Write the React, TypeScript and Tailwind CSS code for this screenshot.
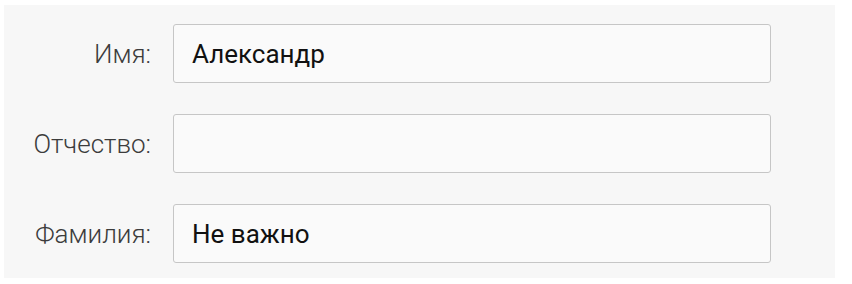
const fields = [
  { label: "Имя:", value: "Александр" },
  { label: "Отчество:", value: "" },
  { label: "Фамилия:", value: "Не важно" },
];

export default function App() {
  return (
    <div className="w-[852px] h-[284px] bg-white pt-[5px] pl-[4px]">
      <div
        className="w-[831px] h-[273px] bg-[#f7f7f7] pt-[19px] flex flex-col gap-[31px]"
        style={{ fontFamily: "Roboto, 'Noto Sans', sans-serif" }}
      >
        {fields.map((f) => (
          <div key={f.label} className="flex items-center gap-[22px]">
            <label className="w-[147px] text-right text-[26px] font-light text-[#3c3c3c] leading-none">
              {f.label}
            </label>
            <div className="w-[598px] h-[59px] bg-[#fafafa] border border-[#c6c6c6] rounded-[3px] flex items-center pl-[18px]">
              <span className="text-[26px] text-[#111] leading-none">{f.value}</span>
            </div>
          </div>
        ))}
      </div>
    </div>
  );
}
